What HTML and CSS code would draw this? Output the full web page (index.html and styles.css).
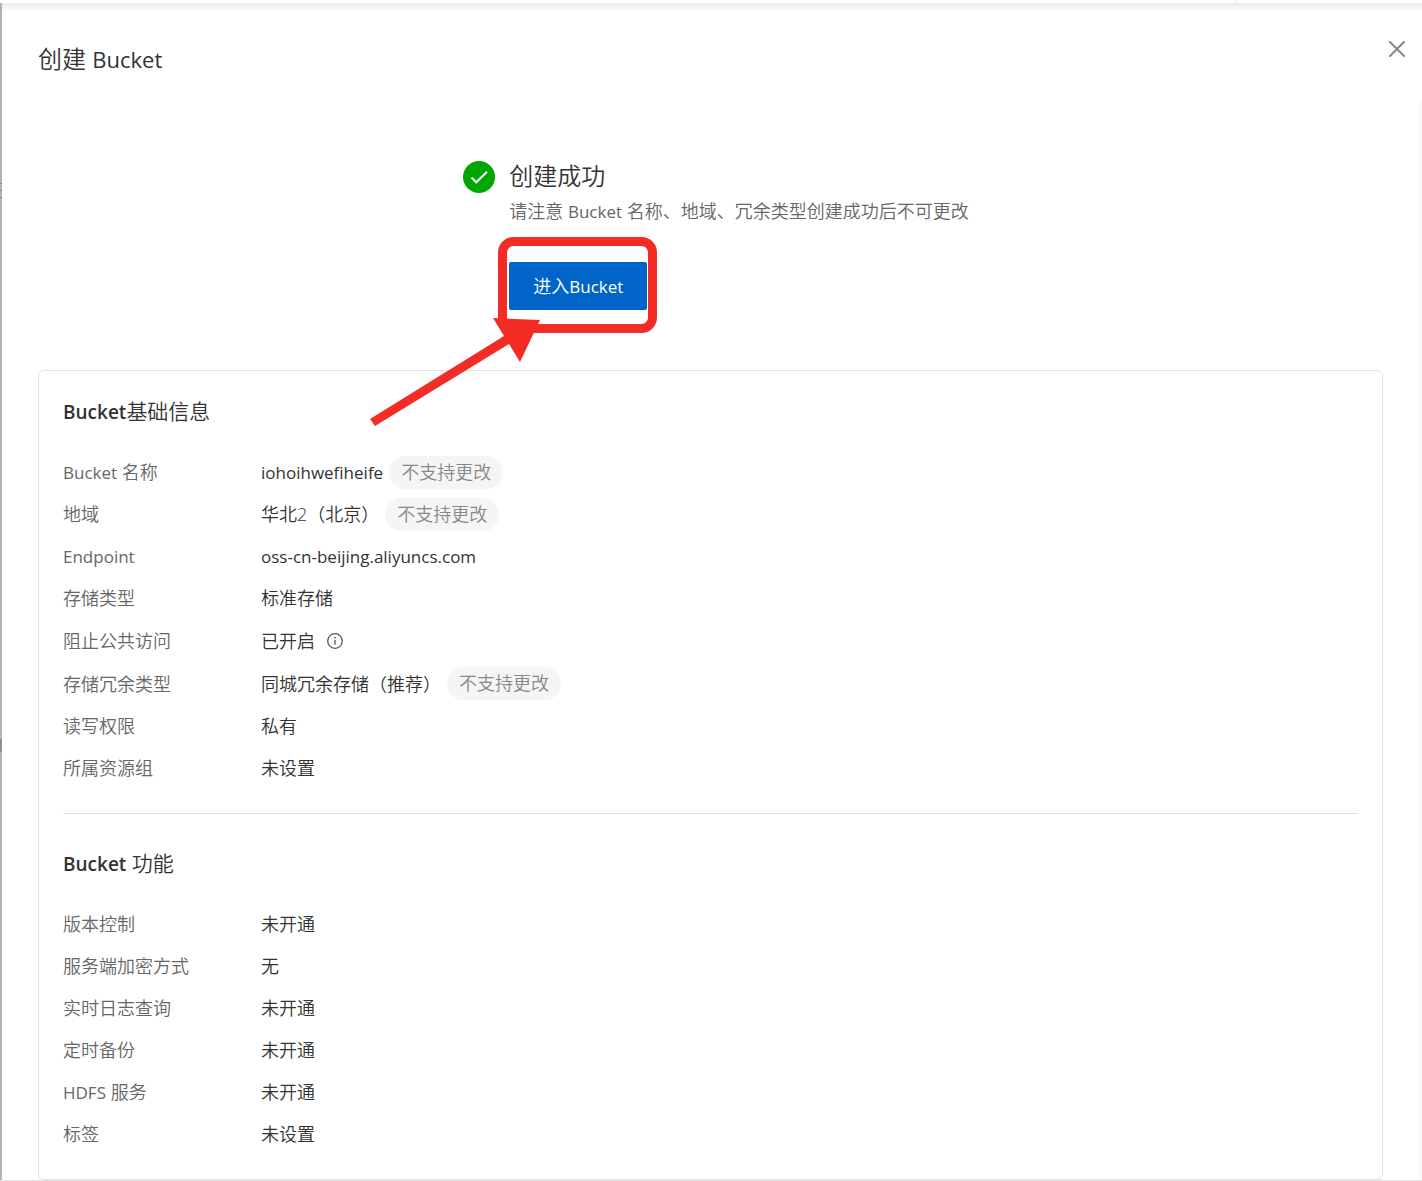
FILE: index.html
```html
<!DOCTYPE html>
<html lang="zh-CN">
<head>
    <meta charset="UTF-8">
    <title>创建 Bucket</title>
    <link rel="stylesheet" href="styles.css">
</head>
<body>
    <div class="topbar"></div>

    <div class="page">
        <div class="mask"></div>

        <main class="drawer">
            <header class="drawer-header">
                <h1>创建 <span class="en">Bucket</span></h1>
                <button type="button" class="close" aria-label="关闭">
                    <svg width="20" height="20" viewBox="0 0 20 20" fill="none" stroke="#888" stroke-width="2" stroke-linecap="round">
                        <path d="M3 3L17 17M17 3L3 17"/>
                    </svg>
                </button>
            </header>

            <div class="drawer-body">
                <section class="result">
                    <svg class="result-icon" width="32" height="32" viewBox="0 0 32 32">
                        <circle cx="16" cy="16" r="16" fill="#00a700"/>
                        <path d="M8.5 16.5L13.3 21.3L24 10.8" fill="none" stroke="#fff" stroke-width="2"/>
                    </svg>
                    <div class="result-content">
                        <h2>创建成功</h2>
                        <p>请注意 <span class="en">Bucket</span> 名称、地域、冗余类型创建成功后不可更改</p>
                        <div class="action">
                            <button type="button" class="btn-primary">进入<span class="en">Bucket</span></button>
                            <svg class="pointer" width="300" height="200" viewBox="0 0 300 200" aria-hidden="true">
                                <rect x="136.5" y="8.5" width="150" height="87" rx="11" fill="none" stroke="#f42c26" stroke-width="9"/>
                                <path d="M4 186L138 103L127 85L174 87L154 129L143 111L9 193Z" fill="#f42c26"/>
                            </svg>
                        </div>
                    </div>
                </section>

                <div class="card">
                    <section>
                        <h3><strong>Bucket</strong>基础信息</h3>
                        <dl>
                            <div class="row">
                                <dt><span class="en">Bucket</span> 名称</dt>
                                <dd><span class="en">iohoihwefiheife</span><span class="tag">不支持更改</span></dd>
                            </div>
                            <div class="row">
                                <dt>地域</dt>
                                <dd>华北2（北京）<span class="tag">不支持更改</span></dd>
                            </div>
                            <div class="row">
                                <dt><span class="en">Endpoint</span></dt>
                                <dd><span class="en">oss-cn-beijing.aliyuncs.com</span></dd>
                            </div>
                            <div class="row">
                                <dt>存储类型</dt>
                                <dd>标准存储</dd>
                            </div>
                            <div class="row row-tall">
                                <dt>阻止公共访问</dt>
                                <dd>已开启
                                    <svg class="info" width="16" height="16" viewBox="0 0 16 16">
                                        <circle cx="8" cy="8" r="7.3" fill="none" stroke="#555" stroke-width="1.3"/>
                                        <path d="M8 6.8V11.8" stroke="#555" stroke-width="1.3"/>
                                        <circle cx="8" cy="4.6" r="0.9" fill="#555"/>
                                    </svg>
                                </dd>
                            </div>
                            <div class="row row-tall">
                                <dt>存储冗余类型</dt>
                                <dd>同城冗余存储（推荐）<span class="tag">不支持更改</span></dd>
                            </div>
                            <div class="row">
                                <dt>读写权限</dt>
                                <dd>私有</dd>
                            </div>
                            <div class="row">
                                <dt>所属资源组</dt>
                                <dd>未设置</dd>
                            </div>
                        </dl>
                    </section>

                    <section>
                        <h3><strong>Bucket</strong> 功能</h3>
                        <dl>
                            <div class="row">
                                <dt>版本控制</dt>
                                <dd>未开通</dd>
                            </div>
                            <div class="row">
                                <dt>服务端加密方式</dt>
                                <dd>无</dd>
                            </div>
                            <div class="row">
                                <dt>实时日志查询</dt>
                                <dd>未开通</dd>
                            </div>
                            <div class="row">
                                <dt>定时备份</dt>
                                <dd>未开通</dd>
                            </div>
                            <div class="row">
                                <dt><span class="en">HDFS</span> 服务</dt>
                                <dd>未开通</dd>
                            </div>
                            <div class="row">
                                <dt>标签</dt>
                                <dd>未设置</dd>
                            </div>
                        </dl>
                    </section>
                </div>
            </div>
        </main>
    </div>
</body>
</html>
```
FILE: styles.css
```css
* {
    box-sizing: border-box;
}

body {
    margin: 0;
    min-height: 100vh;
    display: flex;
    flex-direction: column;
    font-family: "Open Sans", "Noto Sans CJK SC", sans-serif;
    font-size: 18px;
    line-height: 26px;
    font-weight: 350;
    color: #333;
    background: #fff;
}

h1, h2, h3, p, dl, dd {
    margin: 0;
    font-weight: inherit;
}

/* latin words sit a little smaller beside the chinese text */
.en {
    font-size: 17px;
    font-weight: 400;
    line-height: 1;
}

.topbar {
    height: 3px;
    width: 1236px;
    max-width: 87%;
    border-right: 1px solid #e5e5e5;
}

.page {
    flex: 1;
    display: flex;
    border-bottom: 1px solid #e3e3e3;
}

/* strip of the dimmed page left of the drawer */
.mask {
    width: 2px;
    background:
        linear-gradient(#8f8f8f, #8f8f8f) 0 736px / 2px 13px no-repeat,
        linear-gradient(#888, #888) 0 180px / 2px 1px no-repeat,
        linear-gradient(#888, #888) 0 187px / 2px 1px no-repeat,
        linear-gradient(#888, #888) 0 194px / 2px 1px no-repeat,
        #b3b3b3;
}

.drawer {
    flex: 1;
    background: linear-gradient(#eaeaea, #fff 9px);
}

.drawer-header {
    display: flex;
    justify-content: space-between;
    align-items: flex-start;
    height: 96px;
    padding: 36px 15px 0 36px;
}

h1, h2 {
    font-size: 24px;
    line-height: 40px;
}

h1 .en {
    font-size: 22px;
}

.close {
    display: flex;
    padding: 0;
    border: none;
    background: none;
    cursor: pointer;
}

.drawer-body {
    padding: 0 36px;
    border-right: 3px solid #fafafa;
}

.result {
    display: flex;
    justify-content: center;
    gap: 14px;
    padding: 57px 0 60px 11px;
}

.result-icon {
    margin-top: 5px;
}

.result p {
    line-height: 30px;
    color: #666;
}

.action {
    position: relative;
    display: inline-block;
    margin-top: 36px;
}

.btn-primary {
    display: block;
    height: 48px;
    padding: 0 24px;
    border: none;
    border-radius: 2px;
    background: #0064c8;
    color: #fff;
    font: inherit;
    cursor: pointer;
}

/* red frame and arrow over the button */
.pointer {
    position: absolute;
    top: -29px;
    left: -143px;
    pointer-events: none;
}

.card {
    padding: 24px;
    border: 1px solid #e3e3e3;
    border-radius: 6px;
}

.card section + section {
    margin-top: 24px;
    padding-top: 33px;
    border-top: 1px solid #dedede;
}

h3 {
    margin-bottom: 24px;
    font-size: 21px;
    line-height: 32px;
}

h3 strong {
    font-size: 19px;
    font-weight: 600;
    line-height: 1;
}

.row {
    display: flex;
    align-items: center;
    height: 42px;
}

.row-tall {
    height: 43px;
}

dt {
    width: 198px;
    color: #666;
}

dd {
    display: flex;
    align-items: center;
}

.tag {
    margin-left: 6px;
    padding: 0 12px;
    border-radius: 17px;
    background: #f5f5f5;
    color: #888;
    line-height: 33px;
}

.info {
    margin-left: 12px;
}
```
